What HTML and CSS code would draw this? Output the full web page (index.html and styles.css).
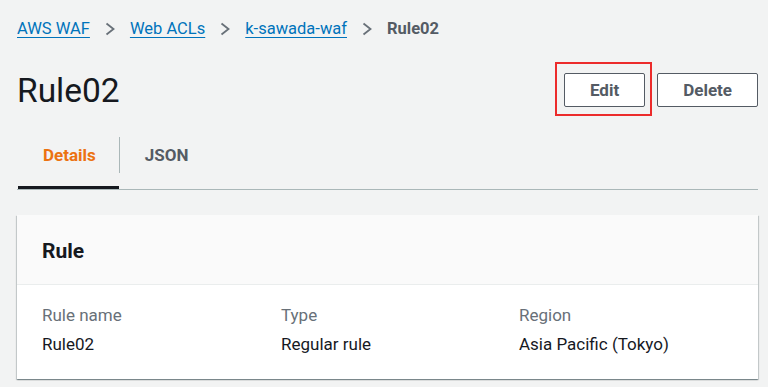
FILE: index.html
```html
<!DOCTYPE html>
<html lang="en">
<head>
<meta charset="utf-8">
<title>Rule02</title>
<link rel="stylesheet" href="styles.css">
</head>
<body>
<div class="page">
  <nav class="breadcrumb">
    <a class="crumb-link" href="#">AWS WAF</a>
    <svg class="chev" width="12" height="14" viewBox="0 0 12 14"><polyline points="2.5,1.5 9.5,7 2.5,12.5" fill="none" stroke="#687078" stroke-width="1.8"/></svg>
    <a class="crumb-link" href="#">Web ACLs</a>
    <svg class="chev" width="12" height="14" viewBox="0 0 12 14"><polyline points="2.5,1.5 9.5,7 2.5,12.5" fill="none" stroke="#687078" stroke-width="1.8"/></svg>
    <a class="crumb-link" href="#">k-sawada-waf</a>
    <svg class="chev" width="12" height="14" viewBox="0 0 12 14"><polyline points="2.5,1.5 9.5,7 2.5,12.5" fill="none" stroke="#687078" stroke-width="1.8"/></svg>
    <span class="crumb-current">Rule02</span>
  </nav>

  <header class="head">
    <h1 class="title">Rule02</h1>
    <div class="actions">
      <div class="highlight-wrap">
        <button class="btn">Edit</button>
        <span class="highlight"></span>
      </div>
      <button class="btn">Delete</button>
    </div>
  </header>

  <div class="tabs">
    <div class="tab active"><span class="tab-label first">Details</span></div>
    <div class="tab"><span class="tab-label second">JSON</span></div>
  </div>

  <section class="card">
    <div class="card-head"><h2 class="card-title">Rule</h2></div>
    <div class="card-body">
      <div class="field">
        <div class="label">Rule name</div>
        <div class="value">Rule02</div>
      </div>
      <div class="field">
        <div class="label">Type</div>
        <div class="value">Regular rule</div>
      </div>
      <div class="field">
        <div class="label">Region</div>
        <div class="value">Asia Pacific (Tokyo)</div>
      </div>
    </div>
  </section>
</div>
</body>
</html>
```

FILE: styles.css
```css
* { box-sizing: border-box; }
html, body { margin: 0; padding: 0; }
body {
  background: #f2f3f3;
  font-family: Roboto, "Liberation Sans", Arial, sans-serif;
  color: #16191f;
  width: 768px;
  height: 387px;
  overflow: hidden;
}
.page {
  padding: 19px 10px 0 17px;
}
.breadcrumb {
  display: flex;
  align-items: center;
  height: 20px;
  font-size: 16.5px;
  line-height: 20px;
}
.crumb-link {
  color: #0073bb;
  text-decoration: underline;
  text-underline-offset: 3px;
  text-decoration-thickness: 1px;
}
.chev {
  display: block;
  margin: 0 14px;
}
.crumb-current {
  color: #545b64;
  font-weight: 700;
}
.head {
  margin-top: 32px;
  display: flex;
  justify-content: space-between;
  align-items: flex-start;
  height: 40px;
}
.title {
  margin: 0;
  font-size: 33.5px;
  line-height: 40px;
  font-weight: 400;
  color: #16191f;
}
.actions {
  display: flex;
  gap: 12px;
  margin-top: 2px;
}
.highlight-wrap {
  position: relative;
}
.highlight {
  position: absolute;
  top: -11px;
  left: -9px;
  right: -7px;
  bottom: -9px;
  border: 2px solid #ec2b2b;
  pointer-events: none;
}
.btn {
  display: block;
  height: 34px;
  padding: 0 25px;
  background: #ffffff;
  border: 1px solid #545b64;
  border-radius: 2px;
  font-family: inherit;
  font-size: 17px;
  font-weight: 700;
  color: #545b64;
  line-height: 32px;
}
.tabs {
  margin-top: 16px;
  display: flex;
  border-bottom: 1px solid #aab7b8;
  padding-left: 1px;
}
.tab {
  padding: 10px 0 16px;
}
.tab.active {
  box-shadow: inset 0 -3px 0 #16191f;
}
.tab-label {
  display: block;
  height: 36px;
  padding-top: 7px;
  font-size: 17px;
  line-height: 22px;
  font-weight: 700;
  color: #545b64;
}
.tab-label.first {
  padding-left: 25px;
  padding-right: 23px;
}
.tab.active .tab-label {
  color: #ec7211;
}
.tab-label.second {
  border-left: 1px solid #aab7b8;
  padding-left: 25px;
  padding-right: 24px;
}
.card {
  margin-top: 25px;
  background: #ffffff;
  box-shadow: 0 1px 1px 0 rgba(0, 28, 36, 0.3), 1px 1px 1px 0 rgba(0, 28, 36, 0.15), -1px 1px 1px 0 rgba(0, 28, 36, 0.15);
}
.card-head {
  background: #fafafa;
  border-bottom: 1px solid #eaeded;
  padding: 23px 25px 20px;
}
.card-title {
  margin: 0;
  font-size: 21px;
  line-height: 26px;
  font-weight: 700;
  color: #16191f;
}
.card-body {
  display: grid;
  grid-template-columns: 239px 238px 1fr;
  padding: 19px 0 24px 25px;
}
.label {
  font-size: 17px;
  line-height: 22px;
  color: #687078;
}
.value {
  margin-top: 7px;
  font-size: 17px;
  line-height: 22px;
  color: #16191f;
}
```
